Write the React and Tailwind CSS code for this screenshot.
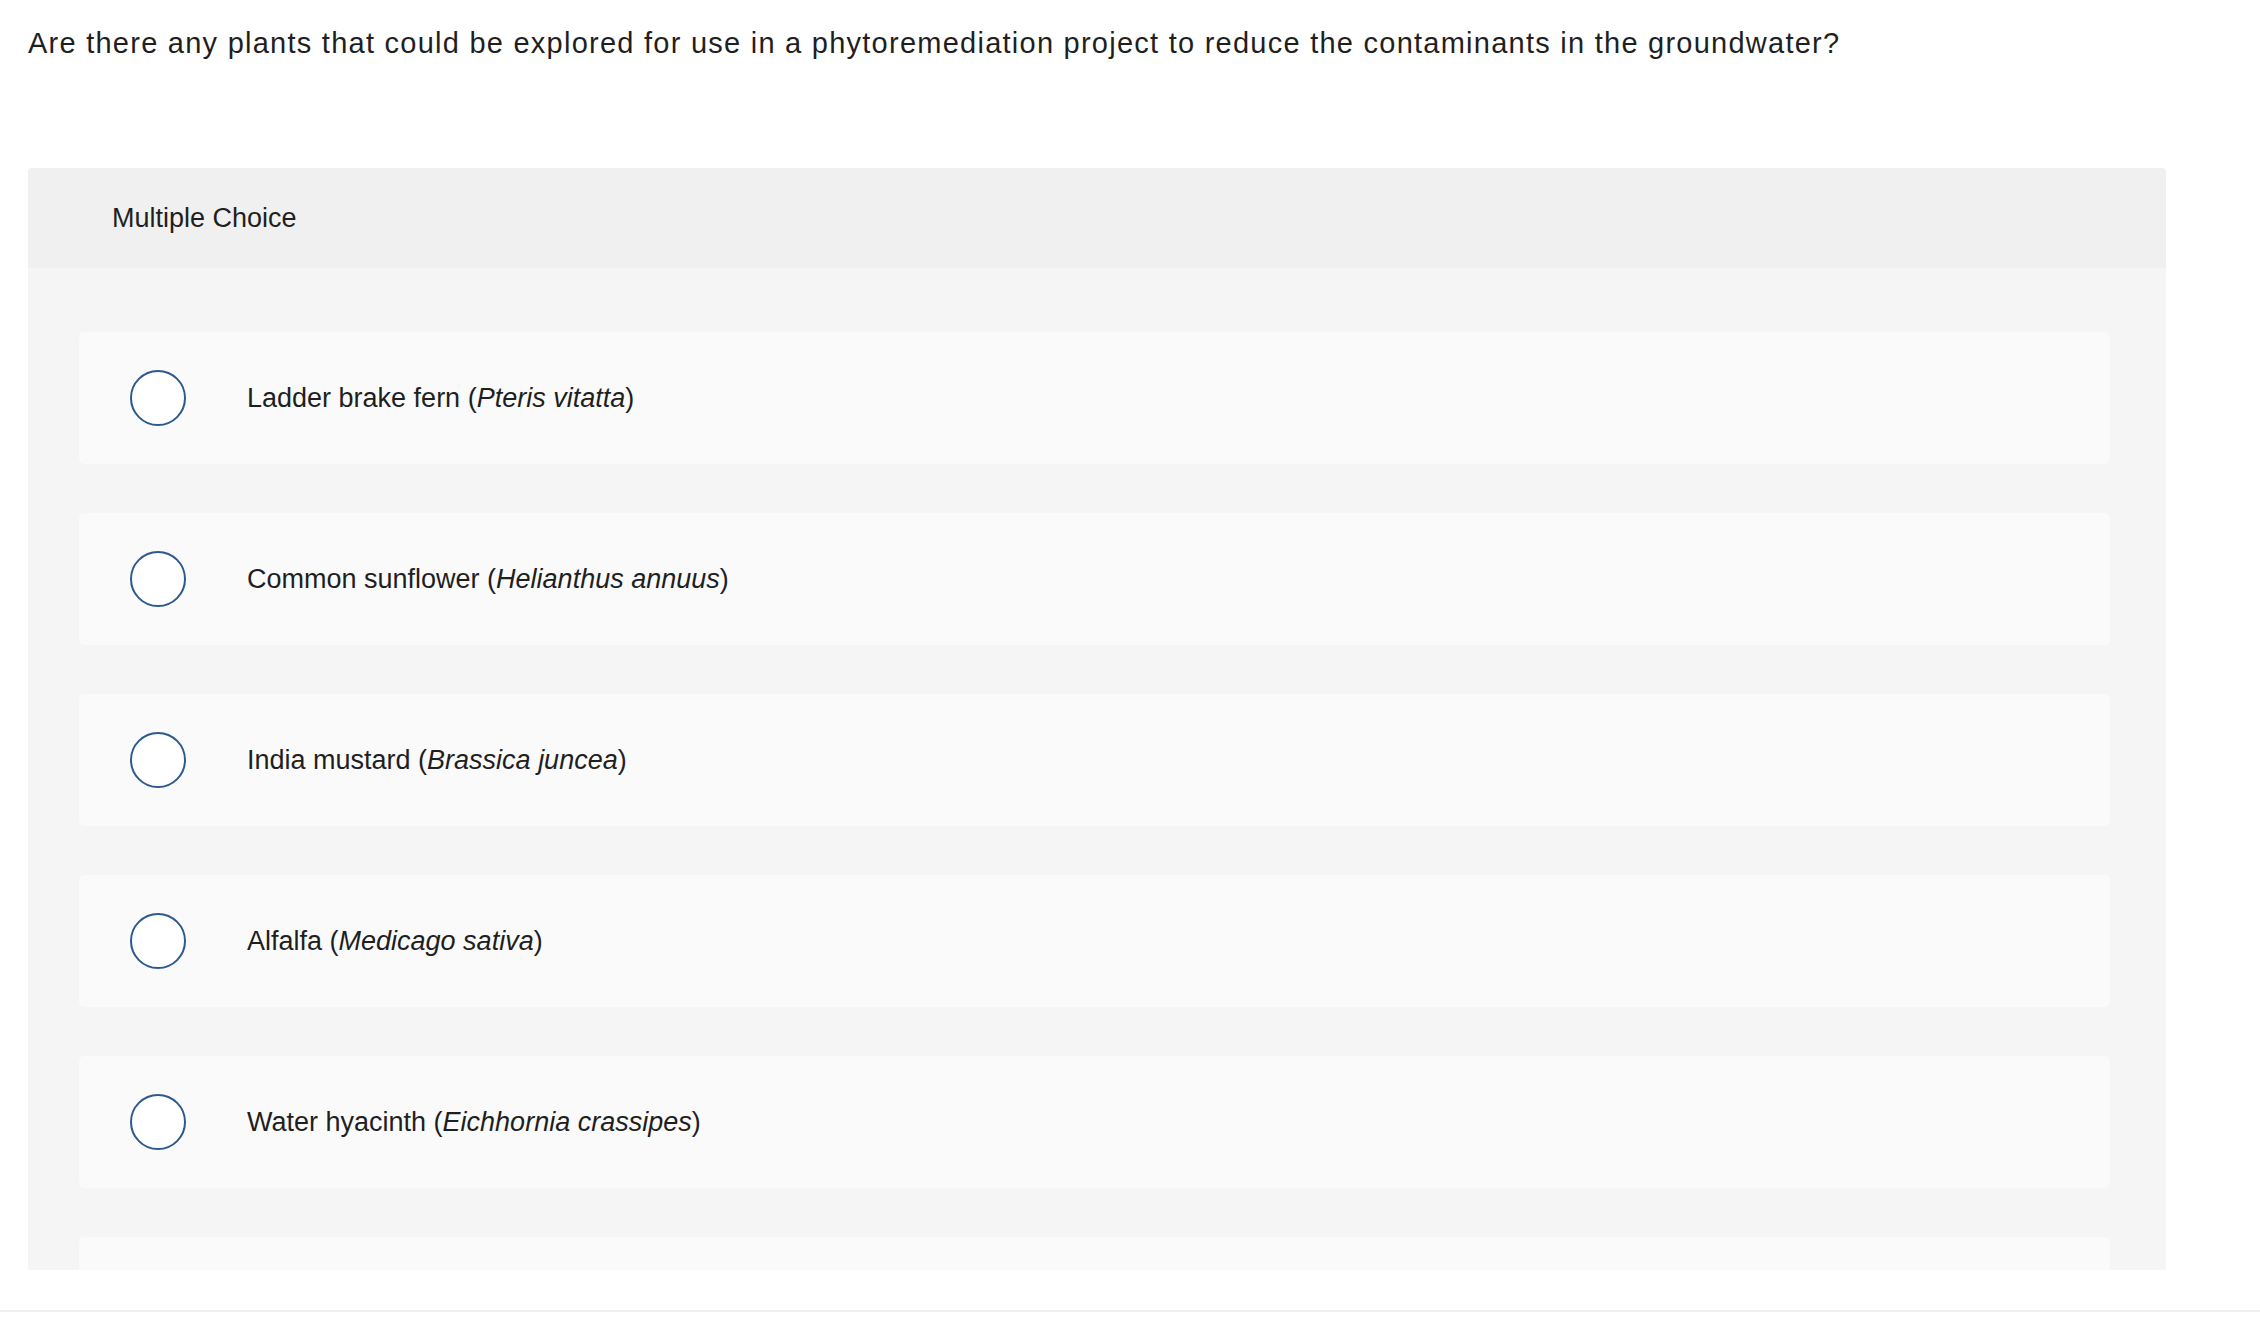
const options = [
  ["Ladder brake fern", "Pteris vitatta"],
  ["Common sunflower", "Helianthus annuus"],
  ["India mustard", "Brassica juncea"],
  ["Alfalfa", "Medicago sativa"],
  ["Water hyacinth", "Eichhornia crassipes"],
  ["", ""],
];

export default function App() {
  return (
    <div className="w-[2260px] h-[1320px] bg-white text-[#1f1f1f] font-['Liberation_Sans',sans-serif] overflow-hidden">
      <p className="pl-[28px] pt-[23px] text-[29px] leading-[40px] tracking-[1.25px] whitespace-nowrap">
        Are there any plants that could be explored for use in a phytoremediation project to reduce the contaminants in the groundwater?
      </p>

      <div className="ml-[28px] mt-[105px] w-[2138px] h-[1102px] bg-[#f5f5f5] rounded-t-[4px] overflow-hidden">
        <div className="h-[100px] bg-[#f0f0f0] pl-[84px] flex items-center text-[27px]">
          Multiple Choice
        </div>
        <div className="pt-[64px] pl-[51px] pr-[56px] flex flex-col gap-[49px]">
          {options.map(([name, latin], i) => (
            <div key={i} className="h-[132px] shrink-0 bg-[#fafafa] rounded-[5px] flex items-center pl-[51px]">
              {name && (
                <>
                  <div className="w-[56px] h-[56px] rounded-full border-2 border-[#2d5a8e] bg-white shrink-0" />
                  <span className="ml-[61px] text-[27px]">
                    {name} (<i>{latin}</i>)
                  </span>
                </>
              )}
            </div>
          ))}
        </div>
      </div>

      <div className="mt-[40px] h-[2px] bg-[#efefef]" />
    </div>
  );
}
